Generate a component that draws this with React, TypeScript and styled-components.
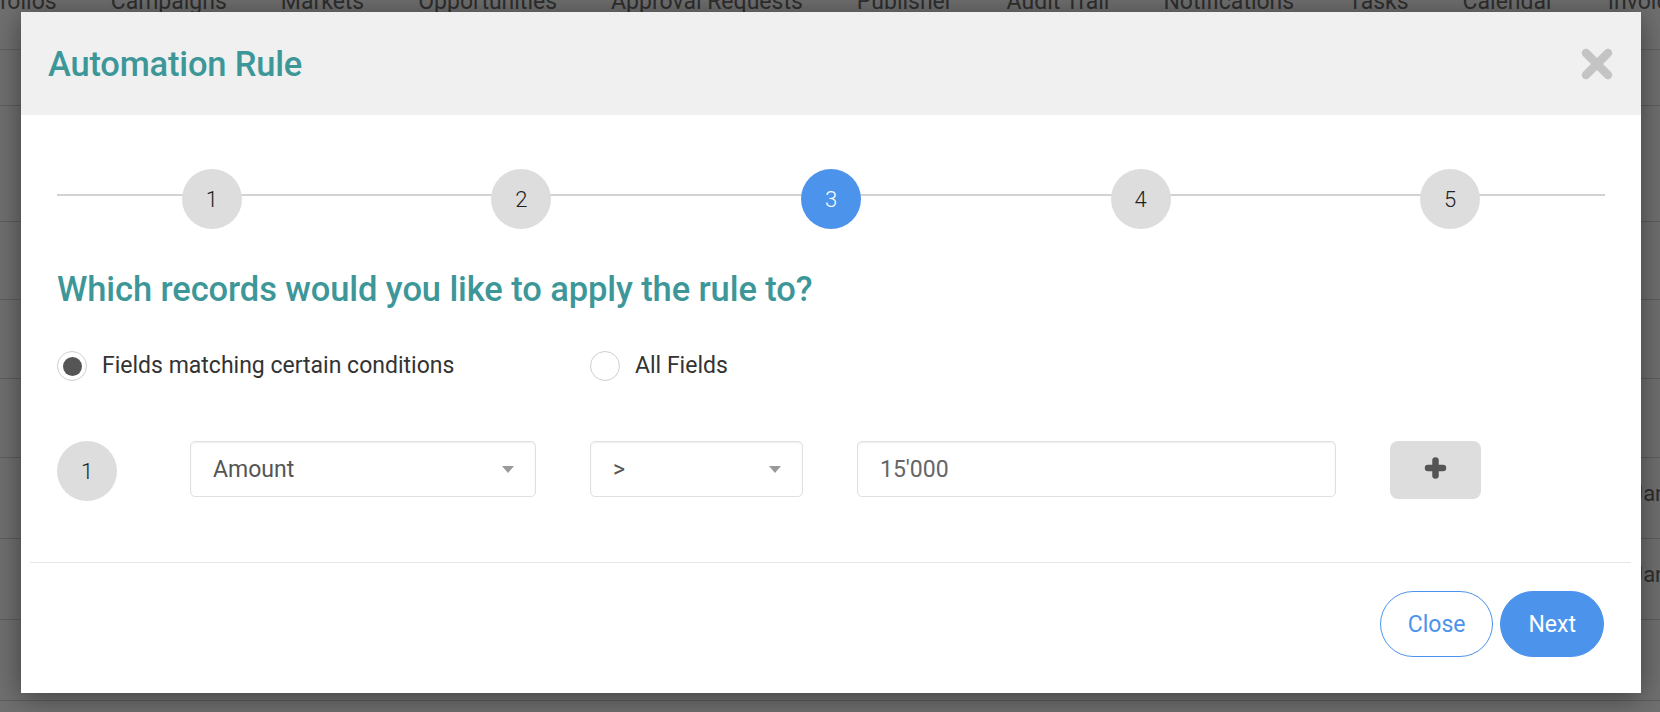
import React from 'react';
import styled, { createGlobalStyle } from 'styled-components';

const GlobalStyle = createGlobalStyle`
  html, body {
    margin: 0;
    padding: 0;
    background: #ffffff;
  }
  body {
    font-family: Roboto, 'Noto Sans', Arial, sans-serif;
  }
  * {
    box-sizing: border-box;
  }
`;

const BLUE = '#4c93ec';
const TEAL = '#3d9799';

const Screen = styled.div`
  position: relative;
  width: 1660px;
  height: 712px;
  overflow: hidden;
  background: #ffffff;
`;

// page that sits behind the modal
const BackPage = styled.div`
  display: flex;
  flex-direction: column;
  margin-top: -10px;
`;

const NavBar = styled.nav`
  display: flex;
  gap: 54px;
  margin-left: -44px;
  height: 60px;
  border-bottom: 1px solid #dcdcdc;
`;

const NavItem = styled.span`
  font-size: 23px;
  line-height: 24px;
  color: #6c6c6c;
  white-space: nowrap;
`;

const TableRow = styled.div<{ $h: number }>`
  height: ${(p) => p.$h}px;
  border-bottom: 1px solid #d6d6d6;
  display: flex;
  align-items: center;
  padding-left: 1631px;
  padding-bottom: 10px;
  font-size: 22px;
  color: #6a6a6a;
  white-space: nowrap;
`;

const Overlay = styled.div`
  position: absolute;
  inset: 0;
  background: rgba(0, 0, 0, 0.56);
  padding: 12px 19px 19px 21px;
  display: flex;
`;

const Modal = styled.div`
  width: 1620px;
  height: 681px;
  background: #ffffff;
  box-shadow: 0 4px 28px rgba(0, 0, 0, 0.45);
  display: flex;
  flex-direction: column;
`;

const Header = styled.div`
  height: 103px;
  flex-shrink: 0;
  background: #f0f0f0;
  display: flex;
  align-items: center;
  justify-content: space-between;
  padding: 0 28px 0 27px;
`;

const Title = styled.h2`
  margin: 0;
  font-size: 34.5px;
  font-weight: 500;
  color: ${TEAL};
  letter-spacing: -0.2px;
`;

const CloseIcon = styled.button`
  width: 32px;
  height: 32px;
  padding: 0;
  border: none;
  background: none;
  display: flex;
  cursor: pointer;
`;

const Body = styled.div`
  padding: 54px 36px 0;
  display: flex;
  flex-direction: column;
`;

const Stepper = styled.div`
  position: relative;
  display: grid;
  grid-template-columns: repeat(5, 1fr);

  &::before {
    content: '';
    position: absolute;
    left: 0;
    right: 0;
    top: 25px;
    height: 2px;
    background: #d2d2d2;
  }
`;

const StepCell = styled.div`
  display: flex;
  justify-content: center;
`;

const Bubble = styled.div<{ $active?: boolean }>`
  position: relative;
  width: 60px;
  height: 60px;
  border-radius: 50%;
  background: ${(p) => (p.$active ? BLUE : '#dddddd')};
  color: ${(p) => (p.$active ? '#ffffff' : '#222222')};
  display: flex;
  align-items: center;
  justify-content: center;
  font-size: 22px;
  font-weight: 300;
`;

const Question = styled.h3`
  margin: 40px 0 0;
  font-size: 34.5px;
  line-height: 40px;
  font-weight: 500;
  color: ${TEAL};
  letter-spacing: -0.1px;
`;

const ConditionGrid = styled.div`
  display: grid;
  grid-template-columns: 79px 346px 213px 479px 91px;
  column-gap: 54px;
  align-items: start;
`;

const RadioRow = styled(ConditionGrid)`
  margin-top: 42px;
`;

const RadioOption = styled.label<{ $span?: number }>`
  grid-column: span ${(p) => p.$span || 1};
  display: flex;
  align-items: center;
  gap: 15px;
  font-size: 23px;
  line-height: 30px;
  color: #333333;
  white-space: nowrap;
  cursor: pointer;
`;

const RadioDot = styled.span<{ $checked?: boolean }>`
  width: 30px;
  height: 30px;
  border-radius: 50%;
  border: 1px solid #cfcfcf;
  display: flex;
  align-items: center;
  justify-content: center;
  flex-shrink: 0;

  &::after {
    content: '';
    width: 19px;
    height: 19px;
    border-radius: 50%;
    background: ${(p) => (p.$checked ? '#555555' : 'transparent')};
  }
`;

const FilterRow = styled(ConditionGrid)`
  margin-top: 60px;
`;

const RowNumber = styled(Bubble)``;

const Field = styled.div`
  height: 56px;
  border: 1px solid #e0e0e0;
  border-radius: 5px;
  box-shadow: inset 0 1px 2px rgba(0, 0, 0, 0.07);
  display: flex;
  align-items: center;
  justify-content: space-between;
  padding: 0 21px 0 22px;
  font-size: 23px;
  color: #555555;
  background: #ffffff;
`;

const Caret = styled.span`
  width: 0;
  height: 0;
  border-left: 6.5px solid transparent;
  border-right: 6.5px solid transparent;
  border-top: 7px solid #9a9a9a;
`;

const TextInput = styled.input`
  height: 56px;
  width: 100%;
  border: 1px solid #e0e0e0;
  border-radius: 5px;
  box-shadow: inset 0 1px 2px rgba(0, 0, 0, 0.07);
  padding: 0 22px;
  font-family: inherit;
  font-size: 23px;
  color: #666666;
  outline: none;
`;

const AddButton = styled.button`
  width: 91px;
  height: 58px;
  border: none;
  border-radius: 8px;
  background: #dddddd;
  display: flex;
  align-items: center;
  justify-content: center;
  padding: 0 0 4px;
  cursor: pointer;
`;

const Footer = styled.div`
  margin: auto 10px 0 9px;
  border-top: 1px solid #e6e6e6;
  padding: 28px 27px 36px 0;
  display: flex;
  justify-content: flex-end;
  gap: 7px;
`;

const PillButton = styled.button<{ $primary?: boolean }>`
  height: 66px;
  padding: 0 27px;
  border-radius: 33px;
  border: 1px solid ${BLUE};
  background: ${(p) => (p.$primary ? BLUE : '#ffffff')};
  color: ${(p) => (p.$primary ? '#ffffff' : BLUE)};
  font-family: inherit;
  font-size: 23px;
  cursor: pointer;
`;

const navItems = [
  'Portfolios',
  'Campaigns',
  'Markets',
  'Opportunities',
  'Approval Requests',
  'Publisher',
  'Audit Trail',
  'Notifications',
  'Tasks',
  'Calendar',
  'Invoices',
];

const rows = [
  { h: 56, text: '' },
  { h: 116, text: '' },
  { h: 78, text: '' },
  { h: 79, text: '' },
  { h: 79, text: '' },
  { h: 81, text: 'Jan' },
  { h: 81, text: 'Jan' },
  { h: 81, text: '' },
];

function App(): JSX.Element {
  const steps = [1, 2, 3, 4, 5];
  const activeStep = 3;

  return (
    <>
      <GlobalStyle />
      <Screen>
        <BackPage>
          <NavBar>
            {navItems.map((item) => (
              <NavItem key={item}>{item}</NavItem>
            ))}
          </NavBar>
          {rows.map((row, index) => (
            <TableRow key={index} $h={row.h}>
              {row.text}
            </TableRow>
          ))}
        </BackPage>

        <Overlay>
          <Modal>
            <Header>
              <Title>Automation Rule</Title>
              <CloseIcon aria-label="close">
                <svg width="32" height="32" viewBox="0 0 32 32">
                  <path
                    d="M5 5 L27 27 M27 5 L5 27"
                    stroke="#c4c4c4"
                    strokeWidth="8.5"
                    strokeLinecap="round"
                  />
                </svg>
              </CloseIcon>
            </Header>

            <Body>
              <Stepper>
                {steps.map((step) => (
                  <StepCell key={step}>
                    <Bubble $active={step === activeStep}>{step}</Bubble>
                  </StepCell>
                ))}
              </Stepper>

              <Question>Which records would you like to apply the rule to?</Question>

              <RadioRow>
                <RadioOption $span={2}>
                  <RadioDot $checked />
                  Fields matching certain conditions
                </RadioOption>
                <RadioOption $span={2}>
                  <RadioDot />
                  All Fields
                </RadioOption>
              </RadioRow>

              <FilterRow>
                <RowNumber>1</RowNumber>
                <Field>
                  Amount
                  <Caret />
                </Field>
                <Field>
                  &gt;
                  <Caret />
                </Field>
                <TextInput readOnly defaultValue="15'000" />
                <AddButton aria-label="add condition">
                  <svg width="23" height="22" viewBox="0 0 23 22">
                    <path
                      d="M11.5 3.5 V18.5 M4 11 H19"
                      stroke="#555555"
                      strokeWidth="6.5"
                      strokeLinecap="round"
                    />
                  </svg>
                </AddButton>
              </FilterRow>
            </Body>

            <Footer>
              <PillButton>Close</PillButton>
              <PillButton $primary>Next</PillButton>
            </Footer>
          </Modal>
        </Overlay>
      </Screen>
    </>
  );
}

export default App;
